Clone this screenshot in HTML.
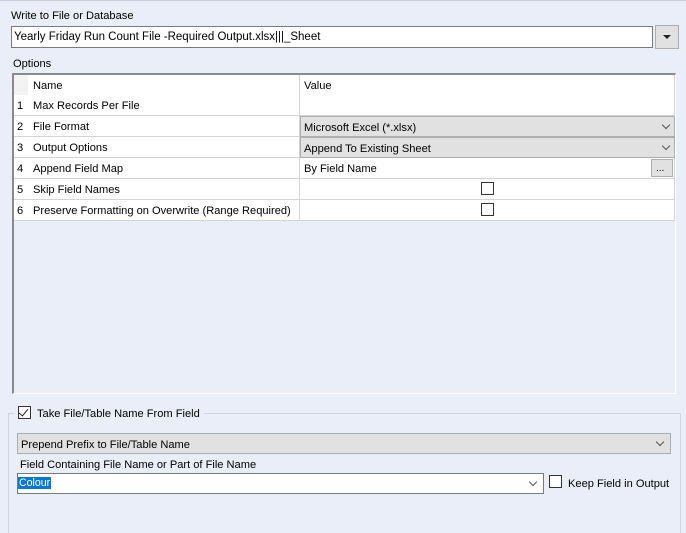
<!DOCTYPE html>
<html><head><style>
*{margin:0;padding:0;box-sizing:border-box}
body{width:686px;height:522px;background:#e9eef8;font-family:"Liberation Sans",Arial,sans-serif;font-size:11.1px;color:#000;position:relative;overflow:hidden}
.a{position:absolute}
.t{position:absolute;white-space:nowrap;line-height:14px}
.cell{position:absolute;border-bottom:1px solid #d4d4d4}
.dd{position:absolute;background:#e1e1e1;border:1px solid #adadad}
.chev{position:absolute;width:6px;height:6px;border-right:1px solid #555;border-bottom:1px solid #555;transform:rotate(45deg)}
.cb{position:absolute;width:13px;height:13px;border:1px solid #333;background:#fff}
</style></head><body>
<div class="a" style="left:0;top:0;width:686px;height:2px;border-top:1px solid #cdd2da"></div>
<div class="t" style="left:11px;top:9px">Write to File or Database</div>
<div class="a" style="left:11px;top:26px;width:642px;height:22px;background:#fff;border:1px solid #7a7a7a"></div>
<div class="t" style="left:14px;top:30px;font-size:11.5px">Yearly Friday Run Count File -Required Output.xlsx|||_Sheet</div>
<div class="a" style="left:655px;top:25px;width:24px;height:24px;background:#e1e1e1;border:1px solid #adadad"></div>
<div class="a" style="left:663px;top:35px;width:0;height:0;border-left:4px solid transparent;border-right:4px solid transparent;border-top:4px solid #222"></div>
<div class="t" style="left:13px;top:57px">Options</div>

<div class="a" style="left:12px;top:73px;width:664px;height:321px;border-top:2px solid #8a8a8a;border-left:2px solid #8a8a8a;border-right:1px solid #fff;border-bottom:1px solid #fff"></div>
<div class="a" style="left:14px;top:75px;width:660px;height:145px;background:#fff"></div>
<div class="a" style="left:14px;top:75px;width:14px;height:20px;background:#f3f3f3"></div>
<div class="a" style="left:299px;top:75px;width:1px;height:145px;background:#d4d4d4"></div>
<div class="a" style="left:674px;top:75px;width:1px;height:145px;background:#d4d4d4"></div>
<div class="t" style="left:33px;top:79px">Name</div>
<div class="t" style="left:304px;top:79px">Value</div>

<div class="cell" style="left:14px;top:95px;width:661px;height:21px"></div>
<div class="cell" style="left:14px;top:116px;width:661px;height:21px"></div>
<div class="cell" style="left:14px;top:137px;width:661px;height:21px"></div>
<div class="cell" style="left:14px;top:158px;width:661px;height:21px"></div>
<div class="cell" style="left:14px;top:179px;width:661px;height:21px"></div>
<div class="cell" style="left:14px;top:200px;width:661px;height:21px"></div>

<div class="t" style="left:17px;top:99px">1</div><div class="t" style="left:33px;top:99px">Max Records Per File</div>
<div class="t" style="left:17px;top:120px">2</div><div class="t" style="left:33px;top:120px">File Format</div>
<div class="t" style="left:17px;top:141px">3</div><div class="t" style="left:33px;top:141px">Output Options</div>
<div class="t" style="left:17px;top:162px">4</div><div class="t" style="left:33px;top:162px">Append Field Map</div>
<div class="t" style="left:17px;top:183px">5</div><div class="t" style="left:33px;top:183px">Skip Field Names</div>
<div class="t" style="left:17px;top:204px">6</div><div class="t" style="left:33px;top:204px">Preserve Formatting on Overwrite (Range Required)</div>

<div class="dd" style="left:300px;top:116px;width:375px;height:21px"></div>
<div class="t" style="left:304px;top:121px">Microsoft Excel (*.xlsx)</div>
<div class="chev" style="left:663px;top:122px"></div>
<div class="dd" style="left:300px;top:137px;width:375px;height:21px"></div>
<div class="t" style="left:304px;top:142px">Append To Existing Sheet</div>
<div class="chev" style="left:663px;top:143px"></div>
<div class="t" style="left:304px;top:162px">By Field Name</div>
<div class="a" style="left:651px;top:159px;width:22px;height:18px;background:#e1e1e1;border:1px solid #adadad"></div>
<div class="t" style="left:656px;top:162px;font-size:10px">...</div>
<div class="cb" style="left:481px;top:182px"></div>
<div class="cb" style="left:481px;top:203px"></div>

<div class="a" style="left:8px;top:413px;width:673px;height:120px;border-top:1px solid #d0d4dc;border-left:1px solid #d0d4dc;border-right:1px solid #d0d4dc"></div>
<div class="a" style="left:14px;top:404px;width:190px;height:18px;background:#e9eef8"></div>
<div class="cb" style="left:18px;top:406px;border-color:#333"></div>
<div class="a" style="left:21px;top:407px;width:5px;height:9px;border-right:1px solid #222;border-bottom:1px solid #222;transform:rotate(40deg)"></div>
<div class="t" style="left:37px;top:407px">Take File/Table Name From Field</div>

<div class="dd" style="left:17px;top:433px;width:654px;height:21px"></div>
<div class="t" style="left:21px;top:438px">Prepend Prefix to File/Table Name</div>
<div class="chev" style="left:657px;top:439px"></div>
<div class="t" style="left:20px;top:458px">Field Containing File Name or Part of File Name</div>
<div class="a" style="left:17px;top:473px;width:527px;height:21px;background:#fff;border:1px solid #7a7a7a"></div>
<div class="t" style="left:18px;top:476px;font-size:10.6px;line-height:15px"><span style="background:#0078d7;color:#fff;padding:0 1px 0 1px">Colour</span></div>
<div class="chev" style="left:530px;top:479px"></div>
<div class="cb" style="left:549px;top:475px"></div>
<div class="t" style="left:568px;top:477px">Keep Field in Output</div>
</body></html>
